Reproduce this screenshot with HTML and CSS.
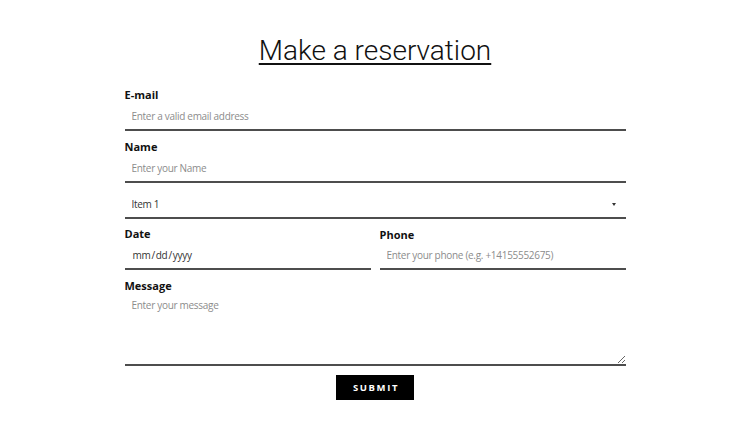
FILE: index.html
```html
<!DOCTYPE html>
<html>
<head>
<meta charset="utf-8">
<link rel="stylesheet" href="styles.css">
</head>
<body>
<main class="page">
  <h1 class="title">Make a reservation</h1>
  <form class="form">
    <div class="field">
      <label class="label">E-mail</label>
      <input class="input" type="email" placeholder="Enter a valid email address">
    </div>
    <div class="field">
      <label class="label">Name</label>
      <input class="input" type="text" placeholder="Enter your Name">
    </div>
    <div class="field select-wrap">
      <select class="input select">
        <option>Item 1</option>
      </select>
    </div>
    <div class="row">
      <div class="field">
        <label class="label">Date</label>
        <input class="input date" type="date">
      </div>
      <div class="field phone">
        <label class="label">Phone</label>
        <input class="input" type="tel" placeholder="Enter your phone (e.g. +14155552675)">
      </div>
    </div>
    <div class="field">
      <label class="label">Message</label>
      <textarea class="input textarea" placeholder="Enter your message"></textarea>
    </div>
    <div class="actions">
      <button class="submit" type="button">SUBMIT</button>
    </div>
  </form>
</main>
</body>
</html>
```
FILE: styles.css
```css
* { box-sizing: border-box; }
body {
  margin: 0;
  background: #fff;
  font-family: "Open Sans", "Liberation Sans", sans-serif;
  color: #111;
}
.page {
  width: 501px;
  margin: 0 auto;
  padding-top: 33px;
  display: flex;
  flex-direction: column;
}
.title {
  margin: 0 0 18px;
  text-align: center;
  font-family: Roboto, "Liberation Sans", sans-serif;
  font-weight: 300;
  font-size: 28px;
  line-height: 36px;
  text-decoration: underline;
  text-decoration-thickness: 2px;
  text-underline-offset: 3px;
  color: #111;
}
.form {
  display: flex;
  flex-direction: column;
  gap: 8px;
}
.field {
  display: flex;
  flex-direction: column;
  position: relative;
}
.label {
  font-size: 11px;
  font-weight: 700;
  line-height: 15px;
  color: #111;
}
.input {
  font-family: "Open Sans", "Liberation Sans", sans-serif;
  font-size: 10px;
  letter-spacing: -0.3px;
  color: #333;
  height: 29px;
  padding: 0 7px;
  border: none;
  border-bottom: 2px solid #4d4d4d;
  background: #fff;
  outline: none;
  border-radius: 0;
  width: 100%;
}
.input::placeholder { color: #8c8c8c; }
.select-wrap { margin-top: -1px; }
.select {
  appearance: none;
  -webkit-appearance: none;
  height: 29px;
  color: #333;
}
.select-wrap::after {
  content: "";
  position: absolute;
  right: 10px;
  top: 13px;
  border-left: 2.5px solid transparent;
  border-right: 2.5px solid transparent;
  border-top: 3px solid #333;
}
.date::-webkit-calendar-picker-indicator { display: none; }
.date::-webkit-inner-spin-button { display: none; }
.row {
  display: grid;
  grid-template-columns: 1fr 1fr;
  gap: 9px;
  margin-top: -1px;
}
.phone .label { margin-top: 1px; }
.phone .input { height: 28px; }
.textarea {
  height: 73px;
  padding-top: 5px;
  resize: vertical;
  display: block;
}
.actions {
  display: flex;
  justify-content: center;
  margin-top: 1px;
}
.submit {
  width: 78px;
  height: 25px;
  background: #000;
  color: #fff;
  border: none;
  font-family: "Open Sans", "Liberation Sans", sans-serif;
  font-weight: 700;
  font-size: 9.5px;
  letter-spacing: 1.6px;
  padding: 0 0 0 2px;
}
```
